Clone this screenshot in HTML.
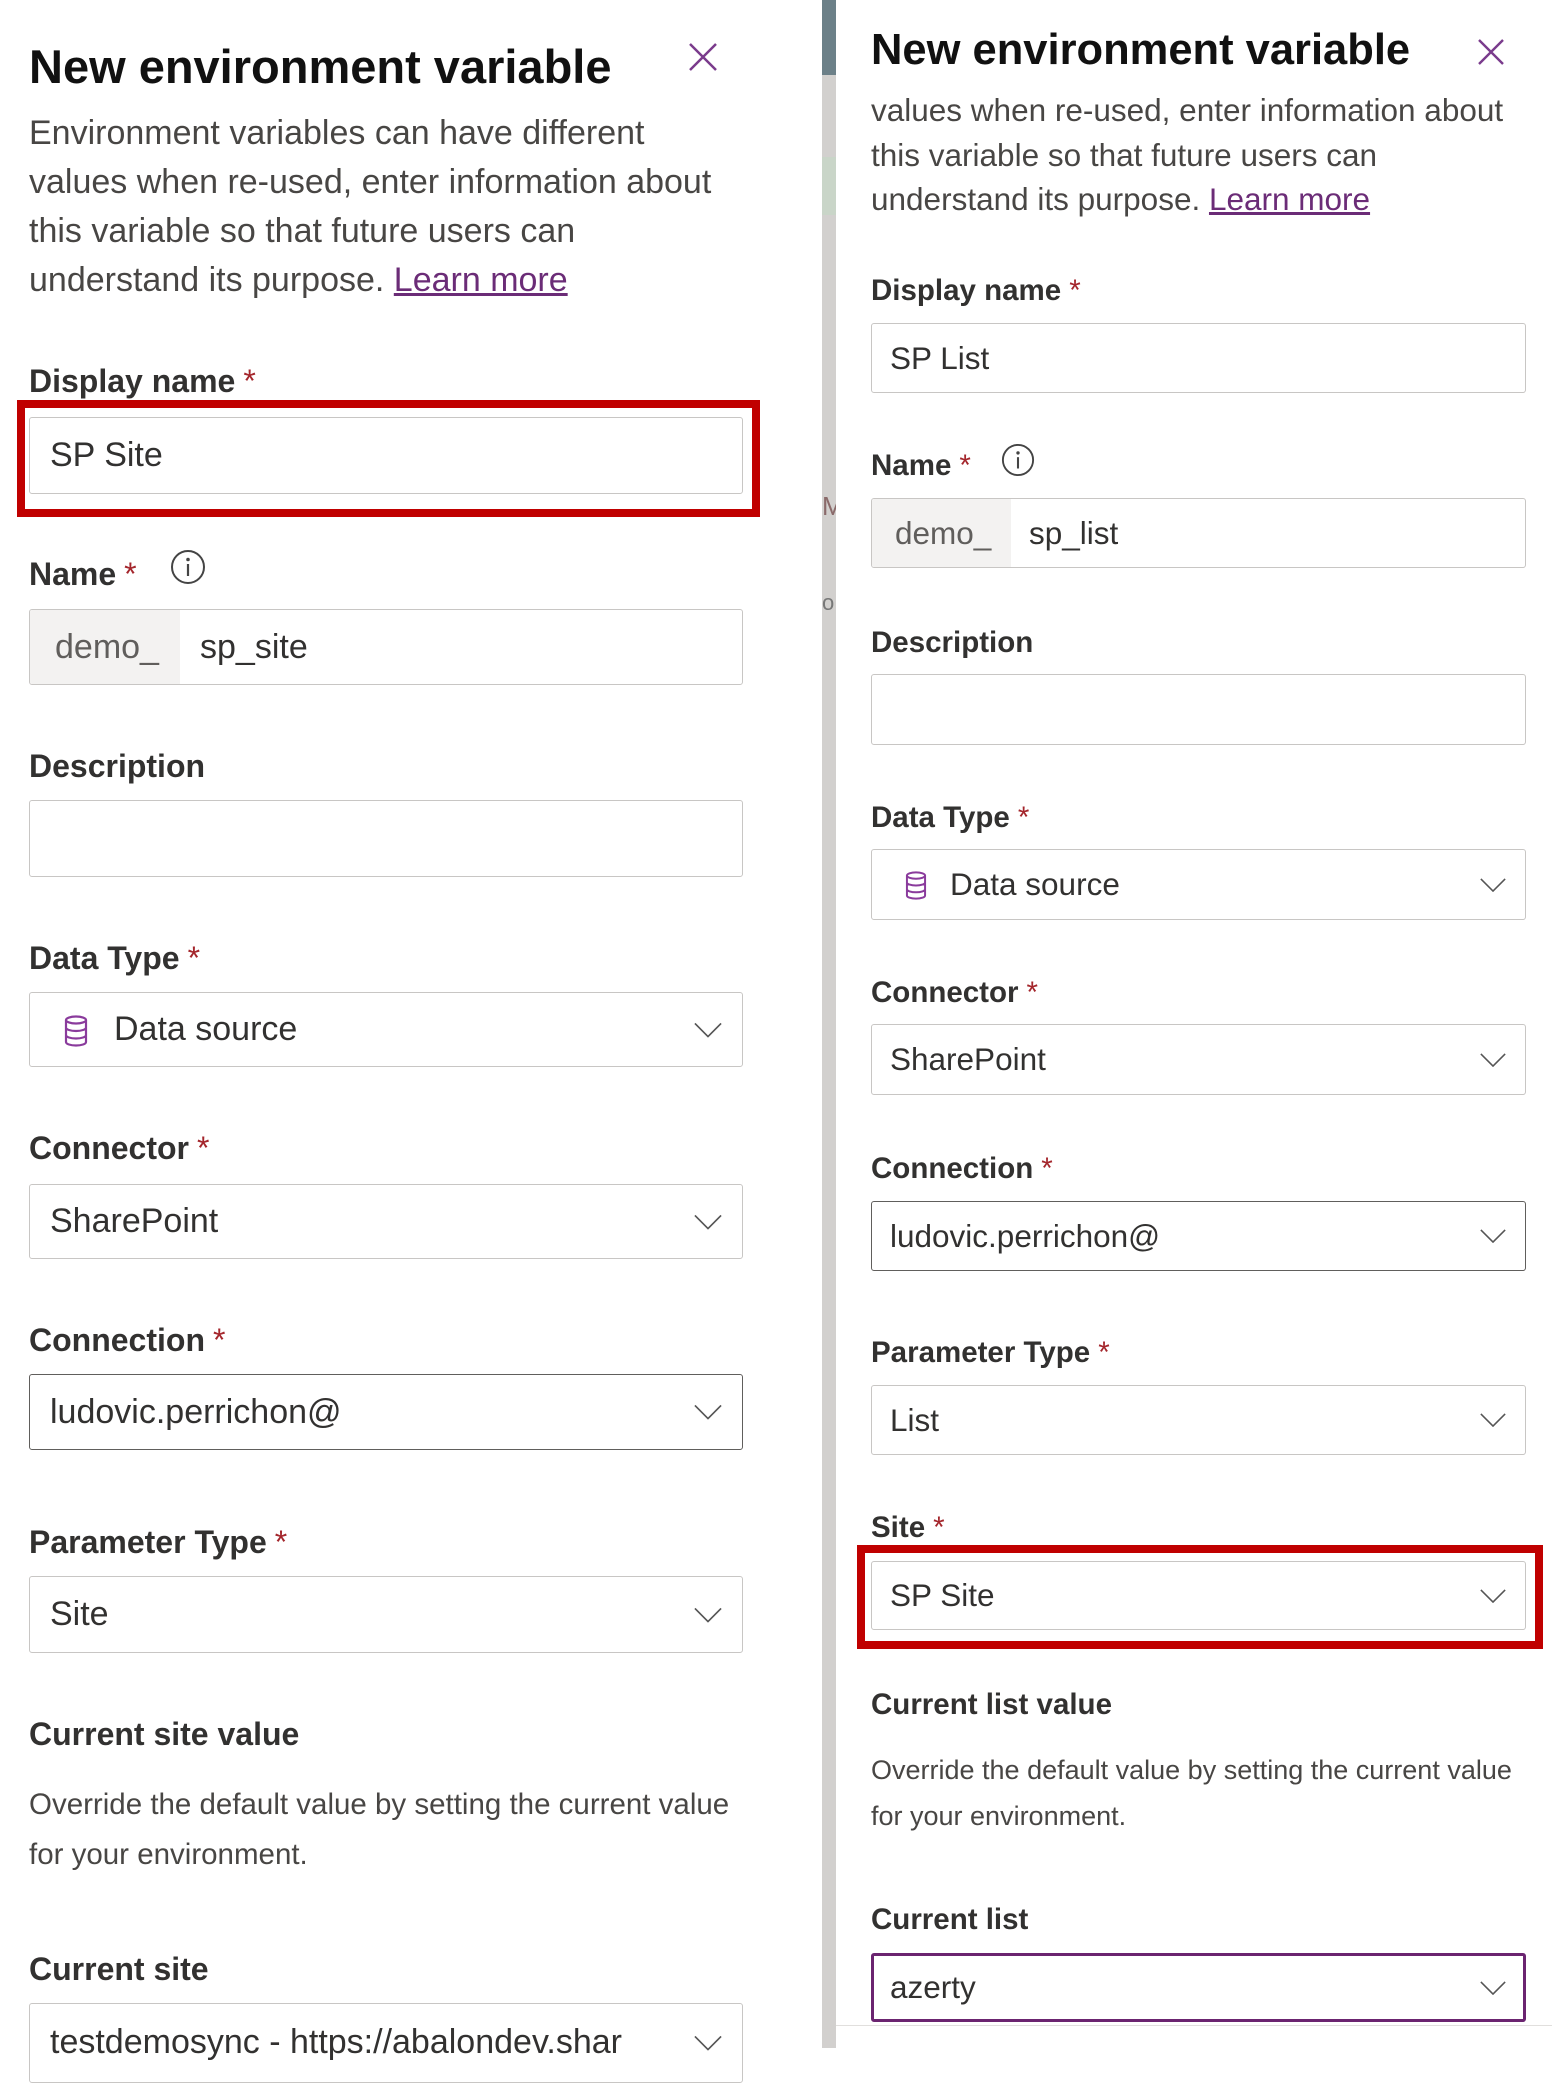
<!DOCTYPE html>
<html><head><meta charset="utf-8"><style>
*{margin:0;padding:0;box-sizing:border-box}
body{width:1552px;height:2048px;overflow:hidden;background:#fff;position:relative;font-family:"Liberation Sans",sans-serif;color:#252423}
.a{position:absolute;white-space:nowrap}
.lbl{font-weight:bold;color:#323130}
.st{color:#a4262c;font-weight:normal;margin-left:8px}
.in{position:absolute;border:1.5px solid #c8c6c4;border-radius:3px;background:#fff;color:#323130;overflow:hidden}
.in span{position:absolute;top:0;bottom:0;display:flex;align-items:center}
.dark{border-color:#605e5c}
.chev{position:absolute;top:50%;transform:translateY(-50%)}
.p{color:#484644}
</style></head><body>

<div class="a" style="left:822px;top:0;width:14px;height:2048px;background:#d2d0ce"></div>
<div class="a" style="left:822px;top:0;width:14px;height:75px;background:#6c8088"></div>
<div class="a" style="left:822px;top:157px;width:14px;height:58px;background:#c9d5c8"></div>
<div class="a" style="left:822px;top:488px;width:14px;height:36px;color:#8a6a6a;font-size:26px;line-height:36px;overflow:hidden">M</div>
<div class="a" style="left:822px;top:588px;width:14px;height:30px;color:#777;font-size:22px;line-height:30px;overflow:hidden">o</div>

<!-- LEFT PANEL -->
<div class="a" style="left:29px;top:40px;font-size:47px;font-weight:bold;line-height:54px;color:#111">New environment variable</div>
<svg class="a" style="left:688px;top:42px" width="30" height="30" viewBox="0 0 30 30"><path d="M2 2L28 28M28 2L2 28" stroke="#7a3b8c" stroke-width="2.5" fill="none"/></svg>
<div class="a p" style="left:29px;top:109px;font-size:34px;line-height:49px">Environment variables can have different<br>values when re-used, enter information about<br>this variable so that future users can<br>understand its purpose. <span style="color:#6b2c77;text-decoration:underline">Learn more</span></div>

<div class="a lbl" style="left:29px;top:362px;font-size:32px;line-height:38px">Display name<span class="st">*</span></div>
<div class="a" style="left:17px;top:400px;width:743px;height:117px;border:8px solid #c00000"></div>
<div class="in" style="left:29px;top:417px;width:714px;height:77px;font-size:34px"><span style="left:20px">SP Site</span></div>

<div class="a lbl" style="left:29px;top:555px;font-size:32px;line-height:38px">Name<span class="st">*</span></div>
<svg class="a" style="left:170px;top:549px" width="36" height="36" viewBox="0 0 36 36"><circle cx="18" cy="18" r="16" stroke="#444" stroke-width="2" fill="none"/><circle cx="18" cy="10.5" r="1.8" fill="#444"/><path d="M18 15v12" stroke="#444" stroke-width="2.2"/></svg>
<div class="in" style="left:29px;top:609px;width:714px;height:76px;font-size:34px"><div style="position:absolute;left:0;top:0;bottom:0;width:150px;background:#f3f2f1"></div><span style="left:25px;color:#605e5c">demo_</span><span style="left:170px">sp_site</span></div>

<div class="a lbl" style="left:29px;top:747px;font-size:32px;line-height:38px">Description</div>
<div class="in" style="left:29px;top:800px;width:714px;height:77px"></div>

<div class="a lbl" style="left:29px;top:939px;font-size:32px;line-height:38px">Data Type<span class="st">*</span></div>
<div class="in" style="left:29px;top:992px;width:714px;height:75px;font-size:34px">
<svg style="position:absolute;left:33px;top:22px" width="26" height="32" viewBox="0 0 26 32"><g stroke="#8a3b9c" stroke-width="2.2" fill="none"><ellipse cx="13" cy="5" rx="10" ry="3.5"/><path d="M3 5v22c0 2 4.5 3.5 10 3.5s10-1.5 10-3.5V5M3 12.5c0 2 4.5 3.5 10 3.5s10-1.5 10-3.5M3 20c0 2 4.5 3.5 10 3.5s10-1.5 10-3.5"/></g></svg>
<span style="left:84px">Data source</span>
<svg class="chev" style="right:20px" width="28" height="15" viewBox="0 0 30 16"><path d="M1 1l14 14 14-14" stroke="#555" stroke-width="1.8" fill="none"/></svg></div>

<div class="a lbl" style="left:29px;top:1129px;font-size:32px;line-height:38px">Connector<span class="st">*</span></div>
<div class="in" style="left:29px;top:1184px;width:714px;height:75px;font-size:34px"><span style="left:20px">SharePoint</span><svg class="chev" style="right:20px" width="28" height="15" viewBox="0 0 30 16"><path d="M1 1l14 14 14-14" stroke="#555" stroke-width="1.8" fill="none"/></svg></div>

<div class="a lbl" style="left:29px;top:1321px;font-size:32px;line-height:38px">Connection<span class="st">*</span></div>
<div class="in dark" style="left:29px;top:1374px;width:714px;height:76px;font-size:34px"><span style="left:20px">ludovic.perrichon@</span><svg class="chev" style="right:20px" width="28" height="15" viewBox="0 0 30 16"><path d="M1 1l14 14 14-14" stroke="#555" stroke-width="1.8" fill="none"/></svg></div>

<div class="a lbl" style="left:29px;top:1523px;font-size:32px;line-height:38px">Parameter Type<span class="st">*</span></div>
<div class="in" style="left:29px;top:1576px;width:714px;height:77px;font-size:34px"><span style="left:20px">Site</span><svg class="chev" style="right:20px" width="28" height="15" viewBox="0 0 30 16"><path d="M1 1l14 14 14-14" stroke="#555" stroke-width="1.8" fill="none"/></svg></div>

<div class="a lbl" style="left:29px;top:1715px;font-size:32px;line-height:38px">Current site value</div>
<div class="a p" style="left:29px;top:1780px;font-size:29.5px;line-height:50px">Override the default value by setting the current value<br>for your environment.</div>

<div class="a lbl" style="left:29px;top:1950px;font-size:32px;line-height:38px">Current site</div>
<div class="in" style="left:29px;top:2003px;width:714px;height:80px;font-size:34px"><span style="left:20px;top:0;bottom:auto;height:77px">testdemosync - https://abalondev.shar</span><svg class="chev" style="right:20px" width="28" height="15" viewBox="0 0 30 16"><path d="M1 1l14 14 14-14" stroke="#555" stroke-width="1.8" fill="none"/></svg></div>

<!-- RIGHT PANEL -->
<div class="a" style="left:871px;top:25px;font-size:43.5px;font-weight:bold;line-height:50px;color:#111">New environment variable</div>
<svg class="a" style="left:1477px;top:38px" width="28" height="28" viewBox="0 0 28 28"><path d="M2 2L26 26M26 2L2 26" stroke="#7a3b8c" stroke-width="2.4" fill="none"/></svg>
<div class="a p" style="left:871px;top:88px;font-size:31.5px;line-height:44.6px">values when re-used, enter information about<br>this variable so that future users can<br>understand its purpose. <span style="color:#6b2c77;text-decoration:underline">Learn more</span></div>

<div class="a lbl" style="left:871px;top:273px;font-size:29.5px;line-height:36px">Display name<span class="st">*</span></div>
<div class="in" style="left:871px;top:323px;width:655px;height:70px;font-size:31.5px"><span style="left:18px">SP List</span></div>

<div class="a lbl" style="left:871px;top:448px;font-size:29.5px;line-height:36px">Name<span class="st">*</span></div>
<svg class="a" style="left:1001px;top:443px" width="34" height="34" viewBox="0 0 36 36"><circle cx="18" cy="18" r="16" stroke="#444" stroke-width="2" fill="none"/><circle cx="18" cy="10.5" r="1.8" fill="#444"/><path d="M18 15v12" stroke="#444" stroke-width="2.2"/></svg>
<div class="in" style="left:871px;top:498px;width:655px;height:70px;font-size:31.5px"><div style="position:absolute;left:0;top:0;bottom:0;width:139px;background:#f3f2f1"></div><span style="left:23px;color:#605e5c">demo_</span><span style="left:157px">sp_list</span></div>

<div class="a lbl" style="left:871px;top:625px;font-size:29.5px;line-height:36px">Description</div>
<div class="in" style="left:871px;top:674px;width:655px;height:71px"></div>

<div class="a lbl" style="left:871px;top:800px;font-size:29.5px;line-height:36px">Data Type<span class="st">*</span></div>
<div class="in" style="left:871px;top:849px;width:655px;height:71px;font-size:31.5px">
<svg style="position:absolute;left:32px;top:21px" width="24" height="29" viewBox="0 0 26 32"><g stroke="#8a3b9c" stroke-width="2.2" fill="none"><ellipse cx="13" cy="5" rx="10" ry="3.5"/><path d="M3 5v22c0 2 4.5 3.5 10 3.5s10-1.5 10-3.5V5M3 12.5c0 2 4.5 3.5 10 3.5s10-1.5 10-3.5M3 20c0 2 4.5 3.5 10 3.5s10-1.5 10-3.5"/></g></svg>
<span style="left:78px">Data source</span>
<svg class="chev" style="right:19px" width="26" height="14" viewBox="0 0 30 16"><path d="M1 1l14 14 14-14" stroke="#555" stroke-width="1.8" fill="none"/></svg></div>

<div class="a lbl" style="left:871px;top:975px;font-size:29.5px;line-height:36px">Connector<span class="st">*</span></div>
<div class="in" style="left:871px;top:1024px;width:655px;height:71px;font-size:31.5px"><span style="left:18px">SharePoint</span><svg class="chev" style="right:19px" width="26" height="14" viewBox="0 0 30 16"><path d="M1 1l14 14 14-14" stroke="#555" stroke-width="1.8" fill="none"/></svg></div>

<div class="a lbl" style="left:871px;top:1151px;font-size:29.5px;line-height:36px">Connection<span class="st">*</span></div>
<div class="in dark" style="left:871px;top:1201px;width:655px;height:70px;font-size:31.5px"><span style="left:18px">ludovic.perrichon@</span><svg class="chev" style="right:19px" width="26" height="14" viewBox="0 0 30 16"><path d="M1 1l14 14 14-14" stroke="#555" stroke-width="1.8" fill="none"/></svg></div>

<div class="a lbl" style="left:871px;top:1335px;font-size:29.5px;line-height:36px">Parameter Type<span class="st">*</span></div>
<div class="in" style="left:871px;top:1385px;width:655px;height:70px;font-size:31.5px"><span style="left:18px">List</span><svg class="chev" style="right:19px" width="26" height="14" viewBox="0 0 30 16"><path d="M1 1l14 14 14-14" stroke="#555" stroke-width="1.8" fill="none"/></svg></div>

<div class="a lbl" style="left:871px;top:1510px;font-size:29.5px;line-height:36px">Site<span class="st">*</span></div>
<div class="a" style="left:857px;top:1545px;width:686px;height:104px;border:8px solid #c00000"></div>
<div class="in" style="left:871px;top:1561px;width:655px;height:69px;font-size:31.5px"><span style="left:18px">SP Site</span><svg class="chev" style="right:19px" width="26" height="14" viewBox="0 0 30 16"><path d="M1 1l14 14 14-14" stroke="#555" stroke-width="1.8" fill="none"/></svg></div>

<div class="a lbl" style="left:871px;top:1687px;font-size:29.5px;line-height:36px">Current list value</div>
<div class="a p" style="left:871px;top:1747px;font-size:27px;line-height:46px">Override the default value by setting the current value<br>for your environment.</div>

<div class="a lbl" style="left:871px;top:1902px;font-size:29.5px;line-height:36px">Current list</div>
<div class="in" style="left:871px;top:1953px;width:655px;height:69px;font-size:31.5px;border:3.5px solid #6b2470"><span style="left:16px">azerty</span><svg class="chev" style="right:17px" width="26" height="14" viewBox="0 0 30 16"><path d="M1 1l14 14 14-14" stroke="#555" stroke-width="1.8" fill="none"/></svg></div>
<div class="a" style="left:836px;top:2025px;width:716px;height:1px;background:#e1dfdd"></div>

</body></html>
